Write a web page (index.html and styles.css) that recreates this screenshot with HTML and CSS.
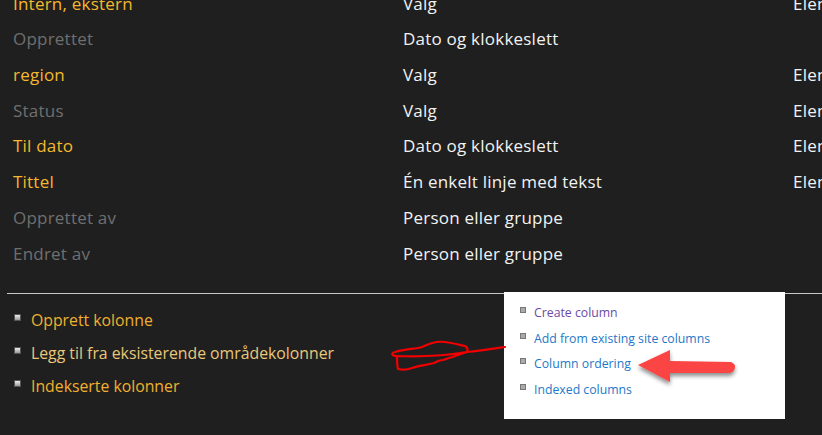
FILE: index.html
```html
<!DOCTYPE html>
<html lang="no">
<head>
<meta charset="utf-8">
<title>Kolonner</title>
<link rel="stylesheet" href="styles.css">
</head>
<body>
<div class="page">
  <div class="columns">
    <a class="name req">Intern, ekstern</a><span class="type">Valg</span><span class="ct">Element</span>
    <a class="name off">Opprettet</a><span class="type">Dato og klokkeslett</span><span class="ct"></span>
    <a class="name req">region</a><span class="type">Valg</span><span class="ct">Element</span>
    <a class="name off">Status</a><span class="type">Valg</span><span class="ct">Element</span>
    <a class="name req">Til dato</a><span class="type">Dato og klokkeslett</span><span class="ct">Element</span>
    <a class="name req">Tittel</a><span class="type">Én enkelt linje med tekst</span><span class="ct">Element</span>
    <a class="name off">Opprettet av</a><span class="type">Person eller gruppe</span><span class="ct"></span>
    <a class="name off">Endret av</a><span class="type">Person eller gruppe</span><span class="ct"></span>
  </div>
  <hr class="rule">
  <ul class="links">
    <li><a>Opprett kolonne</a></li>
    <li><a>Legg til fra eksisterende områdekolonner</a></li>
    <li><a>Indekserte kolonner</a></li>
  </ul>
  <div class="pasted">
    <ul class="en-links">
      <li><a class="visited">Create column</a></li>
      <li><a>Add from existing site columns</a></li>
      <li><a>Column ordering</a></li>
      <li><a>Indexed columns</a></li>
    </ul>
  </div>
  <svg class="scribble" width="822" height="435" viewBox="0 0 822 435" aria-hidden="true">
    <path class="ink" d="M505 347 C492 349 480 351 467 352 C450 355 425 357 397 356 C391 356 391 353 395 352 C405 349 415 349 422 347 C430 343 438 341 445 342 C453 343 460 345 465 346 C468 348 468 350 467 352 C458 355 450 358 443 360 C438 360 437 362 434 363 C426 365 418 366 412 368 C407 370 402 370 398 369 C397 365 397 360 397 356"/>
    <defs>
      <filter id="shadow" x="-20%" y="-30%" width="140%" height="170%">
        <feDropShadow dx="0" dy="3" stdDeviation="2" flood-color="#000" flood-opacity="0.45"/>
      </filter>
    </defs>
    <path class="arrow" filter="url(#shadow)" d="M638 365 L670 350 L670 361 L731 362 Q736 364 735 368 Q734 372 730 373 L670 373 L670 382 Z"/>
  </svg>
</div>
</body>
</html>
```
FILE: styles.css
```css
html, body {
  margin: 0;
  padding: 0;
}
body {
  background: #1f1f1f;
  font-family: "Open Sans", "Noto Sans", sans-serif;
}
.page {
  position: relative;
  width: 822px;
  height: 435px;
  overflow: hidden;
}
.columns {
  display: grid;
  grid-template-columns: 390px 390px 60px;
  grid-auto-rows: 35.72px;
  margin: -14.4px 0 0 13px;
  font-size: 17px;
  letter-spacing: 0.22px;
  line-height: 35.72px;
  white-space: nowrap;
  width: 840px;
}
.name.req { color: #f5b82e; }
.name.off { color: #6f6f6f; }
.type, .ct { color: #f2f2f2; }
.rule {
  height: 1px;
  margin: 21.4px 0 0 7px;
  border: 0;
  background: #c8c8c8;
}
.links {
  list-style: none;
  margin: 10px 0 0 13px;
  padding: 0;
  font-size: 15.8px;
  line-height: 33px;
  color: #f0b030;
}
.links li {
  position: relative;
  padding-left: 18px;
}
.links li:nth-child(2) { color: #e9c77a; }
.links li::before, .en-links li::before {
  content: "";
  position: absolute;
  left: 0;
  box-sizing: border-box;
  border: 1px solid #777;
  background: #aaa;
}
.links li::before {
  left: 1px;
  top: 10px;
  width: 7px;
  height: 7px;
  background: linear-gradient(#eee, #999);
  border-color: #555;
}
.pasted {
  position: absolute;
  left: 504px;
  top: 292px;
  width: 281px;
  height: 127px;
  padding: 8px 0 0 16px;
  box-sizing: border-box;
  background: #fff;
}
.en-links {
  list-style: none;
  margin: 0;
  padding: 0;
  font-size: 12.28px;
  line-height: 25.5px;
  color: #1e78c8;
}
.en-links li {
  position: relative;
  padding-left: 14px;
}
.en-links li::before {
  top: 7px;
  width: 6px;
  height: 6px;
}
.en-links .visited { color: #6a4aa5; }
.scribble {
  position: absolute;
  left: 0;
  top: 0;
  pointer-events: none;
}
.ink {
  fill: none;
  stroke: #f00000;
  stroke-width: 2.2;
  stroke-linejoin: round;
  stroke-linecap: round;
}
.arrow { fill: #fb4444; }
```
